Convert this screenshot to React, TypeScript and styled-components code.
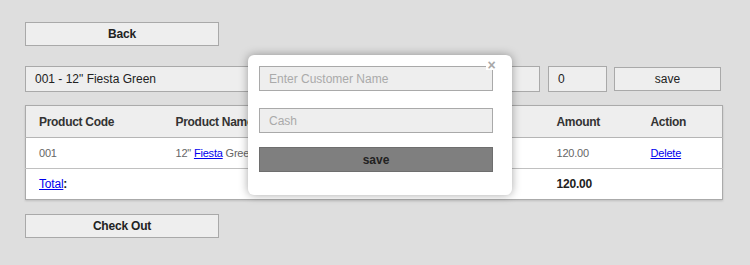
import React from 'react';
import styled, { createGlobalStyle } from 'styled-components';

const GlobalStyle = createGlobalStyle`
  html, body {
    margin: 0;
    padding: 0;
    background: #dedede;
    font-family: "Liberation Sans", Arial, sans-serif;
  }
`;

const Page = styled.div`
  position: relative;
  width: 750px;
  height: 265px;
  padding: 22px 25px 0;
  box-sizing: border-box;
`;

const WideButton = styled.button<{ $mt?: number }>`
  display: block;
  width: 194px;
  height: 24px;
  margin-top: ${(p) => p.$mt ?? 0}px;
  background: #eeeeee;
  border: 1px solid #a9a9a9;
  font-family: inherit;
  font-size: 12px;
  font-weight: bold;
  letter-spacing: -0.2px;
  color: #222;
  padding: 0;
`;

const EntryRow = styled.div`
  display: flex;
  align-items: center;
  margin-top: 20px;
  width: 697px;
`;

const Field = styled.div<{ $w: number; $ml?: number }>`
  box-sizing: border-box;
  width: ${(p) => p.$w}px;
  height: 26px;
  margin-left: ${(p) => p.$ml ?? 0}px;
  background: #eeeeee;
  border: 1px solid #a9a9a9;
  display: flex;
  align-items: center;
  padding-left: 9px;
  font-size: 12px;
  color: #222;
`;

const SaveSmall = styled.button`
  box-sizing: border-box;
  width: 107px;
  height: 24px;
  margin-left: 7px;
  background: #eeeeee;
  border: 1px solid #a9a9a9;
  font-family: inherit;
  font-size: 12px;
  color: #222;
  padding: 0;
`;

const Table = styled.table`
  margin-top: 13px;
  width: 697px;
  border-collapse: collapse;
  border: 1px solid #aaaaaa;
  box-shadow: 0 1px 2px rgba(0, 0, 0, 0.15);
  background: #fff;
  table-layout: fixed;
`;

const Th = styled.th<{ $w: number }>`
  box-sizing: border-box;
  width: ${(p) => p.$w}px;
  height: 32px;
  padding: 0 0 0 13px;
  text-align: left;
  background: #eeeeee;
  border-bottom: 1px solid #b5b5b5;
  font-size: 12px;
  font-weight: bold;
  letter-spacing: -0.3px;
  color: #333;
  white-space: nowrap;
  overflow: hidden;
`;

const Td = styled.td<{ $bold?: boolean }>`
  height: 30px;
  padding: 0 0 0 13px;
  font-size: ${(p) => (p.$bold ? 12 : 11)}px;
  font-weight: ${(p) => (p.$bold ? 'bold' : 'normal')};
  letter-spacing: -0.2px;
  color: ${(p) => (p.$bold ? '#222' : '#666')};
  border-top: 1px solid #c0c0c0;
  white-space: nowrap;
  overflow: hidden;
`;

const Link = styled.a<{ $plain?: boolean }>`
  color: #0000ee;
  text-decoration: underline;
  font-weight: ${(p) => (p.$plain ? 'normal' : 'inherit')};
`;

const Modal = styled.div`
  position: absolute;
  left: 248px;
  top: 55px;
  width: 264px;
  height: 140px;
  box-sizing: border-box;
  padding: 11px;
  background: #fff;
  border-radius: 6px;
  box-shadow: 0 0 10px rgba(0, 0, 0, 0.35);
`;

const Close = styled.span`
  position: absolute;
  top: 5px;
  right: 15px;
  width: 11px;
  height: 10px;
  background: #fff;
  color: #a8a8a8;
  font-size: 14px;
  font-weight: bold;
  line-height: 10px;
  text-align: center;
`;

const ModalInput = styled.input`
  display: block;
  box-sizing: border-box;
  width: 234px;
  height: 25px;
  margin-bottom: 17px;
  padding: 0 9px;
  background: #eeeeee;
  border: 1px solid #a9a9a9;
  font-family: inherit;
  font-size: 12px;
  color: #222;
  outline: none;
  &::placeholder {
    color: #aaaaaa;
  }
`;

const ModalSave = styled.button`
  display: block;
  margin-top: -3px;
  width: 234px;
  height: 25px;
  padding: 0;
  background: #7f7f7f;
  border: 1px solid #6e6e6e;
  font-family: inherit;
  font-size: 12px;
  font-weight: bold;
  color: #222;
`;

export default function App() {
  return (
    <Page>
      <GlobalStyle />
      <WideButton>Back</WideButton>
      <EntryRow>
        <Field $w={395}>001 - 12" Fiesta Green</Field>
        <Field $w={112} $ml={8} />
        <Field $w={59} $ml={8}>0</Field>
        <SaveSmall>save</SaveSmall>
      </EntryRow>
      <Table>
        <thead>
          <tr>
            <Th $w={137}>Product Code</Th>
            <Th $w={140}>Product Name</Th>
            <Th $w={130}>Price</Th>
            <Th $w={111}>Quantity</Th>
            <Th $w={94}>Amount</Th>
            <Th $w={85}>Action</Th>
          </tr>
        </thead>
        <tbody>
          <tr>
            <Td>001</Td>
            <Td>
              12" <Link href="#">Fiesta</Link> Green
            </Td>
            <Td>120.00</Td>
            <Td>1</Td>
            <Td>120.00</Td>
            <Td>
              <Link href="#">Delete</Link>
            </Td>
          </tr>
          <tr>
            <Td $bold>
              <Link href="#" $plain>Total</Link>:
            </Td>
            <Td $bold />
            <Td $bold />
            <Td $bold />
            <Td $bold>120.00</Td>
            <Td $bold />
          </tr>
        </tbody>
      </Table>
      <WideButton $mt={14}>Check Out</WideButton>
      <Modal>
        <Close>×</Close>
        <ModalInput placeholder="Enter Customer Name" />
        <ModalInput placeholder="Cash" />
        <ModalSave>save</ModalSave>
      </Modal>
    </Page>
  );
}
